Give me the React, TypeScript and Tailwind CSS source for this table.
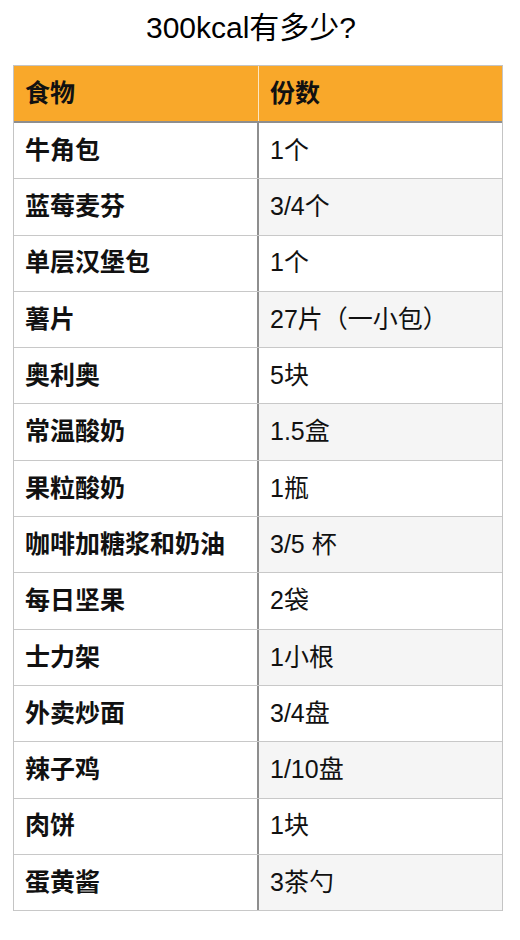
import React from "react";

const rows: [string, string][] = [
  ["牛角包", "1个"],
  ["蓝莓麦芬", "3/4个"],
  ["单层汉堡包", "1个"],
  ["薯片", "27片（一小包）"],
  ["奥利奥", "5块"],
  ["常温酸奶", "1.5盒"],
  ["果粒酸奶", "1瓶"],
  ["咖啡加糖浆和奶油", "3/5 杯"],
  ["每日坚果", "2袋"],
  ["士力架", "1小根"],
  ["外卖炒面", "3/4盘"],
  ["辣子鸡", "1/10盘"],
  ["肉饼", "1块"],
  ["蛋黄酱", "3茶勺"],
];

export default function App() {
  return (
    <div
      className="w-[520px] h-[940px] bg-white text-[#111]"
      style={{ fontFamily: '"Liberation Sans", "Noto Sans CJK SC", sans-serif' }}
    >
      <h1 className="w-[502px] text-center text-[30px] leading-[56px] h-[56px] mb-[9px] text-black font-normal">
        300kcal有多少?
      </h1>
      <div className="ml-[13px] w-[490px] border-l border-r border-t border-[#c4c4c4]">
        <div className="flex h-[57px] bg-[#f9a82a] border-b-2 border-[#8e8e8e]">
          <div className="w-[245px] border-r border-[#fde7c2] flex items-center pl-[11px] text-[25px] font-bold">
            食物
          </div>
          <div className="flex-1 flex items-center pl-[11px] text-[25px] font-bold">份数</div>
        </div>
        {rows.map(([a, b], i) => (
          <div key={i} className="flex h-[56.3px] border-b border-[#c8c8c8]">
            <div className="w-[245px] border-r-2 border-[#8e8e8e] flex items-center pl-[11px] text-[25px] font-bold bg-white">
              {a}
            </div>
            <div
              className={
                "flex-1 flex items-center pl-[11px] text-[25px] " +
                (i % 2 === 1 ? "bg-[#f5f5f5]" : "bg-white")
              }
            >
              {b}
            </div>
          </div>
        ))}
      </div>
    </div>
  );
}
